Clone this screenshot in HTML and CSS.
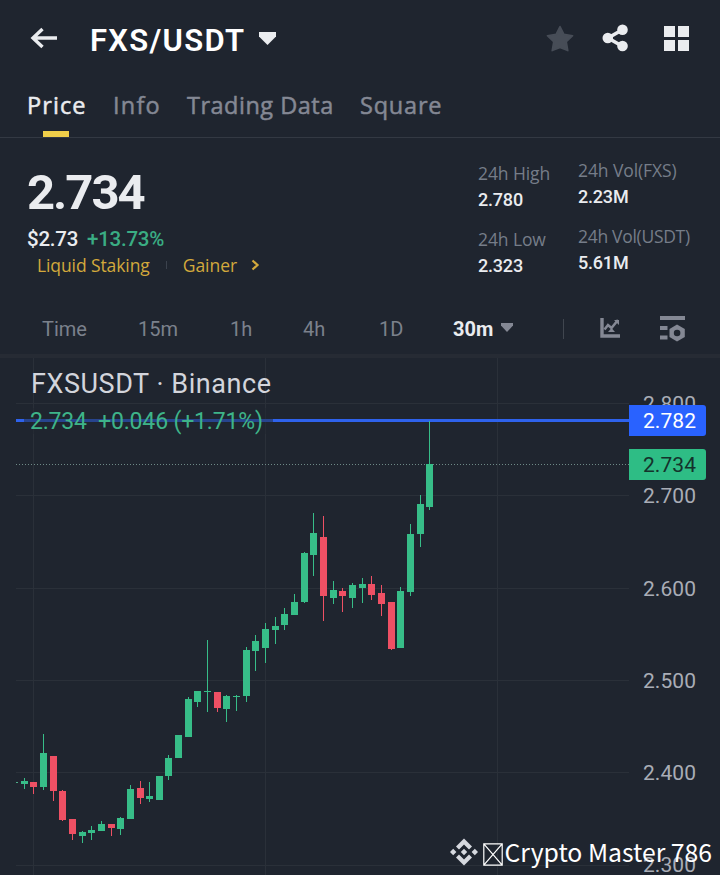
FILE: index.html
```html
<!DOCTYPE html>
<html lang="en">
<head>
<meta charset="utf-8">
<title>FXS/USDT</title>
<link rel="stylesheet" href="styles.css">
</head>
<body>
<header class="topbar">
  <svg class="back" width="28" height="22" viewBox="0 0 28 22"><path d="M12.500 2 3 11l9.500 9M3.500 11H27" fill="none" stroke="#eaecef" stroke-width="3.400"/></svg>
  <h1 class="pair">FXS/USDT</h1>
  <svg class="caret" width="17" height="13" viewBox="0 0 17 13"><path d="M0 0H17V4.500L8.500 13 0 4.500Z" fill="#eaecef"/></svg>
  <div class="actions">
    <svg width="28" height="28" viewBox="0 0 28 28"><path d="M14 1.500 17.900 9.400 26.600 10.700 20.300 16.800 21.800 25.600 14 22.600 6.200 25.600 7.700 16.800 1.400 10.700 10.100 9.400Z" fill="#474d57" stroke="#474d57" stroke-width="1.600" stroke-linejoin="round"/></svg>
    <svg width="28" height="28" viewBox="0 0 28 28"><path d="M21 6 7 14l14 8" fill="none" stroke="#eaecef" stroke-width="3.600"/><circle cx="21.500" cy="5.700" r="5.300" fill="#eaecef"/><circle cx="6.800" cy="14" r="5.300" fill="#eaecef"/><circle cx="21.500" cy="22" r="5.300" fill="#eaecef"/></svg>
    <svg width="25" height="25" viewBox="0 0 25 25"><path d="M0 0H11V11H0ZM14 0H25V11H14ZM0 14H11V25H0ZM14 14H25V25H14Z" fill="#eaecef"/></svg>
  </div>
</header>
<nav class="tabs">
  <span class="tab active">Price</span><span class="tab info">Info</span><span class="tab trading">Trading Data</span><span class="tab square">Square</span>
</nav>
<section class="summary">
  <div class="quote">
    <div class="last">2.734</div>
    <div class="change"><span class="usd">$2.73</span><span class="up">+13.73%</span></div>
    <div class="tags"><span class="tag-a">Liquid Staking</span><i></i><span class="tag-b">Gainer</span><svg width="9" height="12" viewBox="0 0 9 12"><path d="M1.500 1.500 6.500 6l-5 4.500" fill="none" stroke="#d3a93c" stroke-width="2.200"/></svg></div>
  </div>
  <dl class="stats range">
    <dt>24h High</dt><dd>2.780</dd>
    <dt>24h Low</dt><dd>2.323</dd>
  </dl>
  <dl class="stats volume">
    <dt>24h Vol(FXS)</dt><dd>2.23M</dd>
    <dt class="usdt">24h Vol(USDT)</dt><dd>5.61M</dd>
  </dl>
</section>
<nav class="intervals">
  <span class="iv-time">Time</span><span class="iv-15">15m</span><span class="iv-1h">1h</span><span class="iv-4h">4h</span><span class="iv-1d">1D</span>
  <span class="iv-30">30m <svg width="12" height="9" viewBox="0 0 12 9"><path d="M0 0H12V2.500L6 9 0 2.500Z" fill="#848894"/></svg></span>
  <i></i>
  <svg class="ic-line" width="20" height="20" viewBox="0 0 20 20"><path d="M2 0V18H20" fill="none" stroke="#848894" stroke-width="3.400"/><path d="M4.500 11.500 8 7l3.500 3 6.500-8" fill="none" stroke="#848894" stroke-width="2.600"/><path d="M14 2h5v5M8 14l3.500-4 3.500 4Z" fill="#848894"/></svg>
  <svg class="ic-set" width="26" height="26" viewBox="0 0 26 26"><path d="M0 0H25V4H0ZM0 10H7.500V14H0ZM0 19.500H7.500V23.500H0Z" fill="#848894"/><path d="M17 8.500 24.800 12.900V21L17 25.500 9.500 21V12.900Z" fill="#848894"/><circle cx="17.100" cy="17" r="3.300" fill="#1f252f"/></svg>
</nav>
<main class="chart">
  <svg id="plot" width="720" height="521" viewBox="0 354 720 521">
    <rect x="0" y="354" width="720" height="4" fill="#262b34"/>
    <path d="M16 403.500H629M16 495.500H629M16 588.500H629M16 680.500H629M16 772.500H629M16 865.500H629M33.500 358V875M265.500 358V875M497.500 358V875" stroke="#2a3039"/>
    <path d="M16 420.500H629" stroke="#2e62ec" stroke-width="3"/>
    <path d="M16 464.500H629" stroke="#6e8a87" stroke-dasharray="1 2"/>
    <path d="M16 782.500H18" stroke="#4fae8a"/>
    <g id="candles"></g>
    <rect x="24" y="408" width="249" height="26" fill="#1f252f" fill-opacity=".5"/>
    <text class="name" x="31" y="392.500" textLength="240">FXSUSDT · Binance</text>
    <text class="delta" x="30" y="429" textLength="57">2.734</text>
    <text class="delta" x="98" y="429" textLength="165">+0.046 (+1.71%)</text>
    <g class="axis">
      <text x="643" y="410.500" textLength="53">2.800</text>
      <text x="643" y="502.500" textLength="53">2.700</text>
      <text x="643" y="595.500" textLength="53">2.600</text>
      <text x="643" y="687.500" textLength="53">2.500</text>
      <text x="643" y="779.500" textLength="53">2.400</text>
      <text x="643" y="871.500" textLength="53">2.300</text>
    </g>
    <path d="M629 405H703a3 3 0 0 1 3 3V433a3 3 0 0 1-3 3H629Z" fill="#2962ff"/>
    <path d="M629 449H703a3 3 0 0 1 3 3V477a3 3 0 0 1-3 3H629Z" fill="#2ebd85"/>
    <text class="alert" x="643" y="428" textLength="53">2.782</text>
    <text class="current" x="643" y="472" textLength="53">2.734</text>
  </svg>
  <div class="watermark">
    <svg width="28" height="28" viewBox="0 0 28 28"><path d="M14 .5 22 8.500 19 11.500 14 6.500 9 11.500 6 8.500ZM14 27.500 22 19.500 19 16.500 14 21.500 9 16.500 6 19.500ZM14 10.800 17.200 14 14 17.200 10.800 14ZM3.200 10.800 6.400 14 3.200 17.200 0 14ZM24.800 10.800 28 14 24.800 17.200 21.600 14Z" fill="#d6d9df"/></svg>
    <svg class="box" width="20" height="23" viewBox="0 0 20 23"><path d="M.8.8H19.200V22.200H.8ZM.8.8 19.200 22.200M19.200.8.8 22.200" fill="none" stroke="#fff" stroke-width="1.200"/></svg>
    <span>Crypto Master 786</span>
  </div>
</main>
<script src="chart.js"></script>
</body>
</html>
```
FILE: styles.css
```css
* { box-sizing: border-box; }
body {
  margin: 0;
  width: 720px;
  height: 875px;
  overflow: hidden;
  background: #1f252f;
  color: #eaecef;
  font-family: Roboto, "Liberation Sans", sans-serif;
}
svg { display: block; flex: none; }
span { white-space: nowrap; }

.topbar { display: flex; align-items: center; height: 78px; padding: 0 31px 2px 30px; }
.pair { margin: 5px 0 0 32px; width: 154px; font-size: 31px; line-height: 40px; font-weight: 600; letter-spacing: 1.300px; color: #fff; white-space: nowrap; }
.caret { margin-left: 15px; }
.actions { display: flex; align-items: center; margin-left: auto; gap: 28px; }
.actions svg:first-child { margin: 2px -1px 0 0; }
.actions svg:last-child { margin-left: 7px; }

.tabs { display: flex; height: 60px; padding: 10px 0 0 27px; border-bottom: 1px solid #333943; font: 400 23.500px/34px "Open Sans", sans-serif; color: #848894; }
.tab { margin-right: 26px; letter-spacing: .500px; -webkit-text-stroke: .5px currentColor; }
.active { position: relative; width: 60px; color: #eaecef; letter-spacing: 1.100px; }
.active::after { content: ""; position: absolute; left: 16px; top: 43px; width: 26px; height: 6px; background: #f0cf4a; }
.info { width: 48px; letter-spacing: 1.200px; }
.trading { width: 147px; }
.square { letter-spacing: .800px; }

.summary { display: flex; height: 164px; }
.quote { width: 478px; padding: 26px 0 0 27px; }
.last { font-size: 49px; line-height: 58px; font-weight: 700; letter-spacing: -2px; }
.change { display: flex; gap: 9px; margin-top: 5px; font-size: 20.500px; line-height: 24px; font-weight: 500; letter-spacing: -.250px; }
.up { color: #3aad83; }
.tags { display: flex; align-items: center; margin-top: 1px; padding-left: 10px; font: 400 17.500px/26px "Open Sans", sans-serif; color: #d3a93c; }
.tag-a { letter-spacing: -.100px; }
.tags i { width: 1px; height: 8px; margin: 0 16px; background: #3b424d; }
.tags svg { margin-left: 14px; }
.stats { margin: 0; }
.range { width: 100px; padding-top: 23px; }
.volume { padding-top: 20px; }
.stats dt { font: 400 17.500px/24px "Open Sans", sans-serif; letter-spacing: -.100px; color: #767d89; white-space: nowrap; }
.stats dt.usdt { letter-spacing: -.300px; }
.stats dd { margin: 2px 0 14px; font-size: 18px; line-height: 26px; font-weight: 500; letter-spacing: -.200px; }

.intervals { display: flex; align-items: center; height: 52px; padding: 1px 0 0 42px; font-size: 20px; color: #7b818c; }
.iv-time { width: 96px; }
.iv-15 { width: 92px; }
.iv-1h { width: 73px; }
.iv-4h { width: 76px; }
.iv-1d { width: 74px; }
.iv-30 { display: flex; gap: 8px; width: 110px; font-weight: 700; color: #eaecef; }
.iv-30 svg { margin-top: 6px; }
.intervals i { width: 1px; height: 20px; background: #40464f; }
.ic-line { margin: 0 0 2px 36px; }
.ic-set { margin-left: 40px; }

.chart { position: relative; height: 521px; }
.name { font-size: 27px; fill: #d3d5dc; }
.delta { font-size: 23px; fill: #3eb489; }
.axis { font-size: 21px; fill: #a9adb6; }
.alert { font-size: 21px; fill: #fff; }
.current { font-size: 21px; fill: #14322b; }
.watermark { position: absolute; right: 8px; bottom: 6px; display: flex; align-items: center; color: #fff; font: 400 24.750px/36px "Noto Sans CJK SC", sans-serif; }
.watermark span { margin-top: -2px; }
.box { margin: 5px 2px 0 5px; }
```
FILE: chart.js
```javascript
// x, body top, body bottom, wick top, wick bottom, falling
const candles = [
  [24,781,784,778,789],[33,782,787,782,794,1],[43,753,787,734,790],[53,756,791,756,801,1],
  [62,791,820,790,821,1],[72,819,834,819,840,1],[82,832,836,831,843],[91,830,833,826,840],
  [101,824,831,821,831],[111,824,828,824,836,1],[120,818,829,817,835],[130,789,819,785,819],
  [140,788,798,781,804,1],[149,796,799,782,802],[159,776,800,776,800],[168,758,776,755,780],
  [178,735,758,735,758],[188,699,737,697,737],[197,691,702,691,707],[207,691,692,640,712],
  [217,692,708,692,712,1],[226,696,709,695,722],[236,696,697,695,711],[246,650,696,647,702],
  [255,641,651,635,671],[265,629,648,623,663],[275,626,630,617,644],[284,614,625,608,630],
  [294,602,615,594,615],[304,553,602,552,603],[313,533,555,513,576],[323,537,596,516,621,1],
  [333,590,598,581,604],[342,591,596,588,612,1],[352,585,598,583,608],[362,584,588,578,603],
  [371,584,595,576,600,1],[381,593,604,585,616,1],[391,602,649,602,650,1],[400,591,648,587,648],
  [410,534,592,524,596],[420,504,534,495,547],[429,464,507,421,510]
];
document.getElementById("candles").innerHTML = candles.map(([x, t, b, wt, wb, down]) => {
  const c = down ? "#ee5064" : "#37bd88";
  return `<rect x="${x}" y="${wt}" width="1" height="${wb - wt}" fill="${c}"/>` +
    `<rect x="${x - 3}" y="${t}" width="7" height="${b - t}" fill="${c}"/>`;
}).join("");
```
